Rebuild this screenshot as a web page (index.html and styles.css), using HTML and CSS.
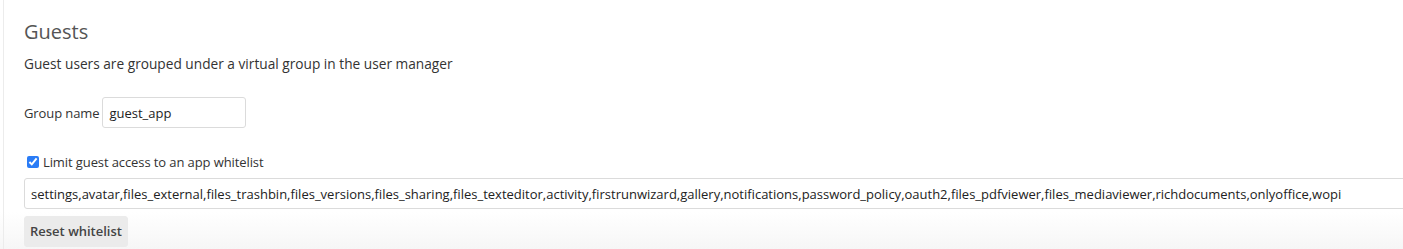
FILE: index.html
```html
<!DOCTYPE html>
<html>
<head>
<meta charset="utf-8">
<link rel="stylesheet" href="styles.css">
</head>
<body>
<div class="section">
  <h2 class="title">Guests</h2>
  <p class="desc">Guest users are grouped under a virtual group in the user manager</p>
  <div class="group-row">
    <label class="label" for="gname">Group name</label>
    <input class="text-input group-input" id="gname" type="text" value="guest_app">
  </div>
  <div class="check-row">
    <input class="check" id="limit" type="checkbox" checked>
    <label class="label" for="limit">Limit guest access to an app whitelist</label>
  </div>
  <input class="text-input whitelist" type="text" value="settings,avatar,files_external,files_trashbin,files_versions,files_sharing,files_texteditor,activity,firstrunwizard,gallery,notifications,password_policy,oauth2,files_pdfviewer,files_mediaviewer,richdocuments,onlyoffice,wopi">
  <div class="btn-row">
    <button class="btn" type="button">Reset whitelist</button>
  </div>
</div>
</body>
</html>
```
FILE: styles.css
```css
html, body {
  margin: 0;
  padding: 0;
  height: 100%;
  overflow: hidden;
}
body {
  font-family: "Open Sans", "Liberation Sans", sans-serif;
  font-size: 13px;
  color: #333;
  background: linear-gradient(to bottom, #ffffff 0, #ffffff 212px, #f6f6f6 249px);
}
.section {
  margin-left: 3px;
  border-left: 1px solid #ececec;
  padding: 17px 0 0 20px;
  height: 100%;
  box-sizing: border-box;
}
.title {
  margin: 0;
  font-size: 20px;
  font-weight: 400;
  line-height: 30px;
  color: #555;
}
.desc {
  margin: 7px 0 0 0;
  font-size: 13.7px;
  line-height: 20px;
}
.group-row {
  margin-top: 23px;
  display: flex;
  align-items: center;
  gap: 3px;
}
.label {
  line-height: 20px;
  letter-spacing: -0.1px;
}
.text-input {
  font-family: inherit;
  font-size: 13px;
  color: #222;
  border: 1px solid #dbdbdb;
  border-radius: 3px;
  padding: 6px 6px;
  line-height: 17px;
  height: 31px;
  box-sizing: border-box;
  background: #fff;
  outline: none;
  margin: 0;
}
.group-input {
  width: 144px;
}
.check-row {
  margin-top: 23px;
  display: flex;
  align-items: center;
  gap: 4px;
  height: 22px;
}
.check {
  margin: 0 0 0 3px;
  width: 12px;
  height: 12px;
  accent-color: #2a7cf6;
}
.whitelist {
  display: block;
  margin-top: 5px;
  width: 1420px;
}
.btn-row {
  margin-top: 7px;
}
.btn {
  font-family: inherit;
  font-size: 13px;
  font-weight: 600;
  color: #444;
  background: #ebebeb;
  border: 1px solid #ebebeb;
  border-radius: 3px;
  padding: 0 5px;
  height: 31px;
  line-height: 29px;
  margin: 0;
}
```
